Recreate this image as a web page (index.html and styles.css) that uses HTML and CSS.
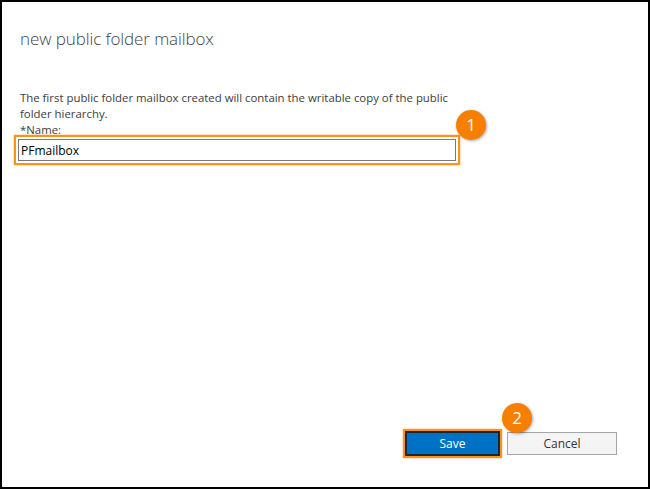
FILE: index.html
```html
<!DOCTYPE html>
<html>
<head>
<meta charset="utf-8">
<link rel="stylesheet" href="styles.css">
</head>
<body>
<div class="frame">
  <h1 class="title">new public folder mailbox</h1>
  <div class="content">
    <p class="desc">The first public folder mailbox created will contain the writable copy of the public folder hierarchy.</p>
    <label class="label" for="name">*Name:</label>
    <div class="hl hl-input">
      <input id="name" class="input" type="text" value="PFmailbox">
      <span class="badge badge-1">1</span>
    </div>
  </div>
  <div class="footer">
    <div class="hl hl-save">
      <button class="btn btn-save">Save</button>
      <span class="badge badge-2">2</span>
    </div>
    <button class="btn btn-cancel">Cancel</button>
  </div>
</div>
</body>
</html>
```
FILE: styles.css
```css
html, body {
  margin: 0;
  padding: 0;
  background: #fff;
}
.frame {
  box-sizing: border-box;
  width: 650px;
  height: 489px;
  border: 2px solid #000;
  background: #fff;
  display: flex;
  flex-direction: column;
  font-family: "Open Sans", "Noto Sans", sans-serif;
  color: #333;
}
.title {
  margin: 25px 0 0 18px;
  font-size: 17px;
  font-weight: 300;
  letter-spacing: -0.1px;
  line-height: 24px;
  color: #444;
}
.content {
  margin: 39px 0 0 18px;
  width: 440px;
}
.desc {
  margin: 0;
  font-size: 11.4px;
  line-height: 16px;
  color: #3c3c3c;
}
.label {
  display: block;
  font-size: 11.4px;
  line-height: 15px;
  color: #3c3c3c;
}
.hl {
  position: relative;
  box-sizing: border-box;
  border: 2px solid #f7931e;
  box-shadow: 0 0 2px #f9b060;
}
.hl-input {
  margin-left: -6px;
  margin-top: -2px;
  width: 446px;
  padding: 2px;
}
.input {
  box-sizing: border-box;
  display: block;
  width: 438px;
  height: 22px;
  border: 1px solid #7a7a7a;
  padding: 0 2px;
  margin: 0;
  font-family: "Open Sans", "Noto Sans", sans-serif;
  font-size: 12px;
  color: #000;
  outline: none;
}
.badge {
  position: absolute;
  width: 30px;
  height: 30px;
  border-radius: 50%;
  background: #f77f00;
  color: #fff;
  font-family: "Open Sans", "Noto Sans", sans-serif;
  font-size: 17px;
  line-height: 30px;
  text-align: center;
  box-shadow: 1px 1px 3px rgba(0,0,0,0.35);
}
.badge-1 {
  right: -28px;
  top: -27px;
}
.badge-2 {
  left: 97px;
  top: -28px;
}
.footer {
  margin-top: auto;
  margin-bottom: 29px;
  margin-right: 31px;
  display: flex;
  justify-content: flex-end;
  align-items: center;
  gap: 5px;
}
.hl-save {
  padding: 0;
}
.btn {
  box-sizing: border-box;
  height: 23px;
  margin: 0;
  font-family: "Open Sans", "Noto Sans", sans-serif;
  font-size: 12px;
  cursor: pointer;
}
.btn-save {
  display: block;
  width: 95px;
  height: 25px;
  background: #0072c6;
  color: #fff;
  border: 2px solid #1b2533;
}
.btn-cancel {
  width: 110px;
  background: #f4f4f4;
  color: #333;
  border: 1px solid #a6a6a6;
}
```
